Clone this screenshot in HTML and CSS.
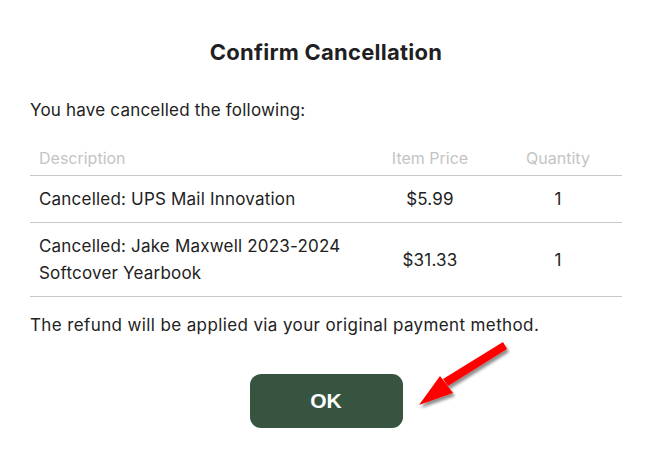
FILE: index.html
```html
<!DOCTYPE html>
<html>
<head>
<meta charset="utf-8">
<link rel="stylesheet" href="styles.css">
</head>
<body>
<div class="dialog">
  <h1 class="title">Confirm Cancellation</h1>
  <p class="intro">You have cancelled the following:</p>
  <table class="items">
    <thead>
      <tr><th class="c-desc">Description</th><th class="c-price">Item Price</th><th class="c-qty">Quantity</th></tr>
    </thead>
    <tbody>
      <tr><td class="c-desc">Cancelled: UPS Mail Innovation</td><td class="c-price">$5.99</td><td class="c-qty">1</td></tr>
      <tr><td class="c-desc">Cancelled: Jake Maxwell 2023-2024<br>Softcover Yearbook</td><td class="c-price">$31.33</td><td class="c-qty">1</td></tr>
    </tbody>
  </table>
  <p class="refund">The refund will be applied via your original payment method.</p>
  <div class="actions">
    <button class="ok">OK</button>
  </div>
  <svg class="arrow" width="120" height="90" viewBox="0 0 120 90">
    <defs>
      <filter id="sh" x="-20%" y="-20%" width="150%" height="150%">
        <feGaussianBlur in="SourceAlpha" stdDeviation="1.5"/>
        <feOffset dx="2" dy="3" result="b"/>
        <feComponentTransfer><feFuncA type="linear" slope="0.45"/></feComponentTransfer>
        <feMerge><feMergeNode/><feMergeNode in="SourceGraphic"/></feMerge>
      </filter>
    </defs>
    <g filter="url(#sh)" fill="#ff0000">
      <polygon points="103,9 107,16 48,53 43,46"/>
      <polygon points="19,72 40,43 53,60"/>
    </g>
  </svg>
</div>
</body>
</html>
```
FILE: styles.css
```css
html, body {
  margin: 0;
  padding: 0;
  background: #ffffff;
}
body {
  font-family: "Inter", "DejaVu Sans", sans-serif;
  color: #222222;
}
.dialog {
  position: relative;
  width: 652px;
  height: 458px;
  box-sizing: border-box;
  padding: 38px 30px 0 30px;
}
.title {
  margin: 0;
  text-align: center;
  font-size: 22px;
  line-height: 28px;
  font-weight: 700;
  color: #1f1f24;
  letter-spacing: 0.25px;
}
.intro {
  margin: 32px 0 0 0;
  font-size: 17px;
  line-height: 24px;
  letter-spacing: 0.2px;
}
.items {
  width: 592px;
  margin-top: 19px;
  border-collapse: collapse;
  font-size: 17px;
  letter-spacing: 0.2px;
}
.items th {
  font-weight: 400;
  font-size: 16px;
  color: #c4c4c4;
  line-height: 20px;
  padding: 7px 0 7px 0;
  border-bottom: 1px solid #c8c8c8;
  letter-spacing: 0;
}
.items td {
  line-height: 27px;
  padding: 10px 0 9px 0;
  border-bottom: 1px solid #c8c8c8;
  color: #222222;
}
.items .c-desc {
  width: 331px;
  padding-left: 9px;
  text-align: left;
}
.items .c-price {
  width: 120px;
  text-align: center;
}
.items .c-qty {
  text-align: center;
  padding-left: 4px;
}
.refund {
  margin: 16px 0 0 0;
  font-size: 17px;
  line-height: 24px;
  letter-spacing: 0.38px;
}
.actions {
  display: flex;
  justify-content: center;
  margin-top: 37px;
}
.ok {
  width: 153px;
  height: 54px;
  border: none;
  border-radius: 11px;
  background: #375441;
  color: #ffffff;
  font-family: "Liberation Sans", Arial, sans-serif;
  font-weight: 700;
  font-size: 21px;
}
.arrow {
  position: absolute;
  left: 400px;
  top: 333px;
}
```
